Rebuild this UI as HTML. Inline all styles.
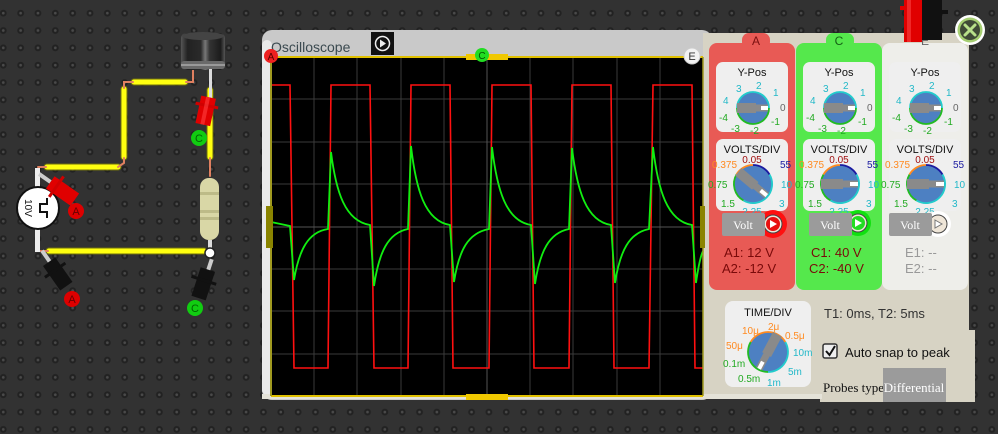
<!DOCTYPE html>
<html><head><meta charset="utf-8">
<style>
html,body{margin:0;padding:0;}
body{width:998px;height:434px;overflow:hidden;background-color:#323232;
background-image:radial-gradient(circle at center,#4a4a4a 0 1.2px,#222 1.6px 3.2px,transparent 3.6px);
background-size:17.35px 17.35px;background-position:-5.4px 4.5px;position:relative;font-family:"Liberation Sans",sans-serif;}
svg{position:absolute;left:0;top:0;}
</style></head><body>
<svg width="998" height="434" viewBox="0 0 998 434" font-family="Liberation Sans, sans-serif">
<defs>
<linearGradient id="capg" x1="0" x2="1" y1="0" y2="0">
 <stop offset="0" stop-color="#555"/><stop offset="0.15" stop-color="#222"/><stop offset="0.45" stop-color="#2a2a2a"/><stop offset="0.55" stop-color="#777"/><stop offset="0.65" stop-color="#333"/><stop offset="0.9" stop-color="#1c1c1c"/><stop offset="1" stop-color="#555"/>
</linearGradient>
</defs>
<!-- ===== circuit ===== -->
<g stroke-linecap="round" fill="none">
 <g stroke="#8a8a00" stroke-width="7" opacity="0.7">
  <path d="M47,167 H118"/><path d="M124,89 V157"/><path d="M134,82 H185"/><path d="M49,251 H204"/><path d="M210,90 V157"/>
 </g>
 <g stroke="#ffff10" stroke-width="5">
  <path d="M47,167 H118"/><path d="M124,89 V157"/><path d="M134,82 H185"/><path d="M49,251 H204"/><path d="M210,90 V157"/>
 </g>
 <g stroke="#e08060" stroke-width="2">
  <path d="M118,167 L124,163 V158"/><path d="M124,88 V82 H133"/><path d="M186,82 H193 V70"/><path d="M38,167 H46"/><path d="M38,251 H48"/><path d="M210,158 V176"/>
 </g>
</g>
<!-- capacitor -->
<rect x="181" y="33" width="44" height="37" rx="5" fill="url(#capg)"/>
<ellipse cx="203" cy="36" rx="21" ry="4" fill="#444"/>
<rect x="181" y="61" width="44" height="8" rx="3" fill="#6a6a6a"/>
<rect x="181" y="64" width="44" height="2" fill="#999"/>
<rect x="209" y="69" width="3" height="30" fill="#ddd"/>
<!-- red probe C -->
<g transform="translate(206,112) rotate(12)">
 <rect x="-8" y="-15" width="15" height="28" fill="#e00000"/>
 <rect x="-12" y="-8" width="23" height="3" fill="#d00000"/>
 <rect x="-3" y="-15" width="4" height="28" fill="#ff4040" opacity="0.6"/>
</g>
<circle cx="199" cy="138" r="8" fill="#11cc11"/><text x="199" y="142" font-size="11" text-anchor="middle" fill="#060">C</text>
<!-- resistor -->
<rect x="200" y="178" width="19" height="62" rx="9" fill="#d9d7a6"/>
<rect x="200" y="192" width="19" height="3" fill="#bdbb88"/><rect x="200" y="210" width="19" height="3" fill="#bdbb88"/><rect x="200" y="217" width="19" height="3" fill="#bdbb88"/>
<rect x="208" y="240" width="4" height="8" fill="#ddd"/>
<circle cx="210" cy="253" r="5" fill="#fff" stroke="#222" stroke-width="1.5"/>
<!-- black probe C -->
<g transform="translate(204,283) rotate(18)">
 <rect x="-2" y="-25" width="4" height="12" fill="#ccc"/>
 <rect x="-8" y="-14" width="15" height="30" fill="#111"/>
 <rect x="-14" y="-4" width="26" height="3" fill="#111"/>
</g>
<circle cx="195" cy="308" r="8" fill="#11cc11"/><text x="195" y="312" font-size="11" text-anchor="middle" fill="#060">C</text>
<!-- function generator -->
<rect x="35" y="168" width="5" height="84" fill="#eee"/>
<circle cx="38" cy="208" r="21" fill="#fff" stroke="#111" stroke-width="2"/>
<path d="M47,198 V204 H40 V212 H47 V218" stroke="#111" stroke-width="2" fill="none"/>
<text transform="translate(25,208) rotate(90)" font-size="10" text-anchor="middle" fill="#111">10V</text>
<!-- red probe A -->
<g transform="translate(62,190) rotate(-55)">
 <rect x="-2" y="-28" width="4" height="14" fill="#ccc"/>
 <rect x="-8" y="-14" width="15" height="30" fill="#e00000"/>
 <rect x="-13" y="-8" width="25" height="3" fill="#d00000"/>
</g>
<circle cx="76" cy="211" r="8" fill="#dd0000"/><text x="76" y="215" font-size="11" text-anchor="middle" fill="#600">A</text>
<!-- black probe A -->
<g transform="translate(57,272) rotate(-35)">
 <rect x="-2" y="-26" width="4" height="14" fill="#ccc"/>
 <rect x="-8" y="-13" width="15" height="30" fill="#111"/>
 <rect x="-13" y="-4" width="25" height="3" fill="#111"/>
</g>
<circle cx="72" cy="299" r="8" fill="#dd0000"/><text x="72" y="303" font-size="11" text-anchor="middle" fill="#600">A</text>

<!-- ===== oscilloscope ===== -->
<rect x="262" y="30" width="450" height="370" rx="10" fill="#c9c9c9"/>
<rect x="262" y="40" width="10" height="355" rx="5" fill="#eaeaea"/>
<rect x="703" y="33" width="266" height="364" fill="#d7d3c4"/>
<rect x="820" y="330" width="155" height="72" fill="#d7d3c4"/>
<rect x="262" y="394" width="560" height="5" fill="#e4e2d8"/>
<text x="271" y="52" font-size="14" fill="#3b4a50">Oscilloscope</text>
<rect x="371" y="32" width="23" height="23" fill="#111"/>
<circle cx="382.5" cy="43.5" r="7" fill="none" stroke="#eee" stroke-width="1.5"/>
<path d="M380,39.5 L386,43.5 L380,47.5Z" fill="#eee"/>
<!-- screen -->
<rect x="271" y="57" width="432" height="339" fill="#000"/>
<g stroke="#3a3a3a" stroke-width="1">
 <path d="M314,57V396M357,57V396M401,57V396M444,57V396M530,57V396M573,57V396M617,57V396M660,57V396"/>
 <path d="M271,99H703M271,142H703M271,184H703M271,269H703M271,311H703M271,354H703"/>
</g>
<g stroke="#555" stroke-width="1"><path d="M487,57V396M271,227H703"/></g>
<path d="M271,85 H290 L294,368 H328 L331,85 H370 L374,368 H408 L411,85 H450 L453,368 H489 L492,85 H531 L534,368 H569 L572,85 H611 L614,368 H649 L653,85 H692 L695,368 H703" fill="none" stroke="#ff1010" stroke-width="1.6"/>
<path d="M271,222 L290,226 L294,280 C299,250 308,232 328,229 L331,152 C336,192 345,221 370,225 L374,286 C379,252 388,233 408,229 L411,146 C416,190 425,221 450,225 L454,282 C459,250 468,233 489,229 L492,147 C497,190 506,221 531,225 L535,284 C540,251 549,233 569,229 L572,148 C577,190 586,221 611,225 L615,283 C620,251 629,233 649,229 L653,147 C658,190 667,221 692,225 L696,283 C699,262 701,255 703,251" fill="none" stroke="#11ee11" stroke-width="1.8"/>
<path d="M271,57 H703" stroke="#e0c000" stroke-width="2"/>
<path d="M271,396 H703" stroke="#e0c000" stroke-width="2"/>
<path d="M271,57 V396" stroke="#a09a20" stroke-width="2"/>
<path d="M703,57 V396" stroke="#a09a20" stroke-width="1.5"/>
<rect x="266" y="206" width="7" height="42" fill="#8a8400"/>
<rect x="700" y="206" width="5" height="42" fill="#8a8400"/>
<rect x="466" y="54" width="42" height="6" fill="#f0c800"/>
<rect x="466" y="394" width="42" height="6" fill="#f0c800"/>
<circle cx="482" cy="55" r="7" fill="#22dd22"/><text x="482" y="59" font-size="10" text-anchor="middle" fill="#050">C</text>
<circle cx="271" cy="56" r="7" fill="#ee2020"/><text x="271" y="60" font-size="10" text-anchor="middle" fill="#500">A</text>
<circle cx="692" cy="56" r="8" fill="#f2f2f2" stroke="#ccc"/><text x="692" y="60" font-size="11" text-anchor="middle" fill="#333">E</text>

<!-- channel panels -->
<g transform="translate(709,0)">
 <rect x="0" y="43" width="86" height="247" rx="8" fill="#e85a55"/>
 <rect x="33" y="33" width="28" height="16" rx="7" fill="#e85a55"/>
 <text x="47" y="45" font-size="12" text-anchor="middle" fill="#7a1010">A</text>
</g>
<g transform="translate(796,0)">
 <rect x="0" y="43" width="86" height="247" rx="8" fill="#55e84c"/>
 <rect x="30" y="33" width="28" height="16" rx="7" fill="#55e84c"/>
 <text x="43" y="45" font-size="12" text-anchor="middle" fill="#156015">C</text>
</g>
<g transform="translate(882,0)">
 <rect x="0" y="43" width="86" height="247" rx="8" fill="#eeeeea"/>
 <text x="43" y="45" font-size="12" text-anchor="middle" fill="#666">E</text>
</g>

<!-- top-right probes and close -->
<rect x="900" y="6" width="8" height="4" fill="#e00000"/>
<rect x="904" y="0" width="18" height="42" fill="#e00000"/>
<rect x="907" y="0" width="4" height="42" fill="#ff5050" opacity="0.5"/>
<rect x="922" y="0" width="20" height="40" fill="#111"/>
<rect x="940" y="10" width="8" height="4" fill="#111"/>
<circle cx="970" cy="30" r="15" fill="#fff"/>
<circle cx="970" cy="30" r="12.5" fill="#a6cf72"/>
<circle cx="970" cy="30" r="10" fill="#3f4a36"/>
<path d="M965,25 L975,35 M975,25 L965,35" stroke="#b8e08a" stroke-width="3" stroke-linecap="round"/>

<g font-size="10">
<!-- A -->
<g transform="translate(709,0)">
 <rect x="7" y="62" width="72" height="70" rx="7" fill="#efefef"/>
 <text x="43" y="76" font-size="11" text-anchor="middle" fill="#111">Y-Pos</text>
 <g transform="translate(44,108)">
  <circle r="16" fill="#4d80c2"/>
  <path d="M-16,0 A16,16 0 0 1 16,0" stroke="#22cccc" stroke-width="1.8" fill="none"/>
  <path d="M16,0 A16,16 0 0 1 -16,0" stroke="#22bb22" stroke-width="1.8" fill="none"/>
  <rect x="-16" y="-5" width="19" height="10" fill="#8a8a8a"/><rect x="0" y="-3.5" width="15" height="7" fill="#8a8a8a"/><rect x="8" y="-2" width="7" height="4" fill="#fff"/>
 </g>
 <text x="27" y="92" fill="#22b8c8">3</text><text x="47" y="89" fill="#22b8c8">2</text><text x="64" y="96" fill="#22b8c8">1</text><text x="14" y="104" fill="#22b8c8">4</text>
 <text x="71" y="111" fill="#666">0</text><text x="10" y="121" fill="#22aa22">-4</text><text x="62" y="125" fill="#22aa22">-1</text><text x="22" y="132" fill="#22aa22">-3</text><text x="41" y="134" fill="#22aa22">-2</text>
 <rect x="7" y="139" width="72" height="72" rx="7" fill="#efefef"/>
 <text x="43" y="153" font-size="11" text-anchor="middle" fill="#111">VOLTS/DIV</text>
 <g transform="translate(44,184)">
  <circle r="19" fill="#4d80c2"/>
  <path d="M-9.5,16.5 A19,19 0 0 1 -16.5,-9.5" stroke="#22bb22" stroke-width="1.8" fill="none"/>
  <path d="M-16.5,-9.5 A19,19 0 0 1 0,-19" stroke="#ff8a20" stroke-width="1.8" fill="none"/>
  <path d="M0,-19 A19,19 0 0 1 16.5,-9.5" stroke="#1a1aa0" stroke-width="1.8" fill="none"/>
  <path d="M16.5,-9.5 A19,19 0 0 1 -9.5,16.5" stroke="#22cccc" stroke-width="1.8" fill="none"/>
  <g transform="rotate(40)"><rect x="-19" y="-5" width="22" height="10" fill="#8a8a8a"/><rect x="0" y="-3.5" width="18" height="7" fill="#8a8a8a"/><rect x="10" y="-2" width="8" height="4" fill="#fff"/></g>
 </g>
 <text x="43" y="163" text-anchor="middle" fill="#a01010">0.05</text>
 <text x="3" y="168" fill="#ff8a20">0.375</text><text x="71" y="168" fill="#1a1aa0">55</text>
 <text x="-1" y="188" fill="#22aa22">0.75</text><text x="72" y="188" fill="#22b8c8">10</text>
 <text x="12" y="207" fill="#22aa22">1.5</text><text x="70" y="207" fill="#22b8c8">3</text>
 <text x="43" y="215" text-anchor="middle" fill="#22b8c8">2.25</text>
 <circle cx="64" cy="224" r="14" fill="#ff1010"/>
 <circle cx="64" cy="224" r="9" fill="#efe6d8" stroke="#444" stroke-width="1"/>
 <circle cx="64" cy="224" r="7" fill="#e81010"/>
 <path d="M61,220 L68,224 L61,228Z" fill="#fff"/>
 <rect x="13" y="213" width="43" height="23" rx="2" fill="#9b9b9b"/>
 <text x="34" y="229" font-size="12" text-anchor="middle" fill="#fff" font-family="Liberation Serif, serif">Volt</text>
 <text x="15" y="257" font-size="13" fill="#7a0a0a">A1: 12 V</text>
 <text x="13" y="273" font-size="13" fill="#7a0a0a">A2: -12 V</text>
</g>
<!-- C -->
<g transform="translate(796,0)">
 <rect x="7" y="62" width="72" height="70" rx="7" fill="#efefef"/>
 <text x="43" y="76" font-size="11" text-anchor="middle" fill="#111">Y-Pos</text>
 <g transform="translate(44,108)">
  <circle r="16" fill="#4d80c2"/>
  <path d="M-16,0 A16,16 0 0 1 16,0" stroke="#22cccc" stroke-width="1.8" fill="none"/>
  <path d="M16,0 A16,16 0 0 1 -16,0" stroke="#22bb22" stroke-width="1.8" fill="none"/>
  <rect x="-16" y="-5" width="19" height="10" fill="#8a8a8a"/><rect x="0" y="-3.5" width="15" height="7" fill="#8a8a8a"/><rect x="8" y="-2" width="7" height="4" fill="#fff"/>
 </g>
 <text x="27" y="92" fill="#22b8c8">3</text><text x="47" y="89" fill="#22b8c8">2</text><text x="64" y="96" fill="#22b8c8">1</text><text x="14" y="104" fill="#22b8c8">4</text>
 <text x="71" y="111" fill="#666">0</text><text x="10" y="121" fill="#22aa22">-4</text><text x="62" y="125" fill="#22aa22">-1</text><text x="22" y="132" fill="#22aa22">-3</text><text x="41" y="134" fill="#22aa22">-2</text>
 <rect x="7" y="139" width="72" height="72" rx="7" fill="#efefef"/>
 <text x="43" y="153" font-size="11" text-anchor="middle" fill="#111">VOLTS/DIV</text>
 <g transform="translate(44,184)">
  <circle r="19" fill="#4d80c2"/>
  <path d="M-9.5,16.5 A19,19 0 0 1 -16.5,-9.5" stroke="#22bb22" stroke-width="1.8" fill="none"/>
  <path d="M-16.5,-9.5 A19,19 0 0 1 0,-19" stroke="#ff8a20" stroke-width="1.8" fill="none"/>
  <path d="M0,-19 A19,19 0 0 1 16.5,-9.5" stroke="#1a1aa0" stroke-width="1.8" fill="none"/>
  <path d="M16.5,-9.5 A19,19 0 0 1 -9.5,16.5" stroke="#22cccc" stroke-width="1.8" fill="none"/>
  <rect x="-19" y="-5" width="22" height="10" fill="#8a8a8a"/><rect x="0" y="-3.5" width="18" height="7" fill="#8a8a8a"/><rect x="10" y="-2" width="8" height="4" fill="#fff"/>
 </g>
 <text x="43" y="163" text-anchor="middle" fill="#a01010">0.05</text>
 <text x="3" y="168" fill="#ff8a20">0.375</text><text x="71" y="168" fill="#1a1aa0">55</text>
 <text x="-1" y="188" fill="#22aa22">0.75</text><text x="72" y="188" fill="#22b8c8">10</text>
 <text x="12" y="207" fill="#22aa22">1.5</text><text x="70" y="207" fill="#22b8c8">3</text>
 <text x="43" y="215" text-anchor="middle" fill="#22b8c8">2.25</text>
 <circle cx="62" cy="223" r="13" fill="#10e010"/>
 <circle cx="62" cy="223" r="9" fill="#efe6d8" stroke="#444" stroke-width="1"/>
 <circle cx="62" cy="223" r="7" fill="#22dd22"/>
 <path d="M59,219 L66,223 L59,227Z" fill="#fff"/>
 <rect x="13" y="213" width="43" height="23" rx="2" fill="#9b9b9b"/>
 <text x="34" y="229" font-size="12" text-anchor="middle" fill="#fff" font-family="Liberation Serif, serif">Volt</text>
 <text x="15" y="257" font-size="13" fill="#7a0a0a">C1: 40 V</text>
 <text x="13" y="273" font-size="13" fill="#7a0a0a">C2: -40 V</text>
</g>
<!-- E -->
<g transform="translate(882,0)">
 <rect x="7" y="62" width="72" height="70" rx="7" fill="#efefef"/>
 <text x="43" y="76" font-size="11" text-anchor="middle" fill="#111">Y-Pos</text>
 <g transform="translate(44,108)">
  <circle r="16" fill="#4d80c2"/>
  <path d="M-16,0 A16,16 0 0 1 16,0" stroke="#22cccc" stroke-width="1.8" fill="none"/>
  <path d="M16,0 A16,16 0 0 1 -16,0" stroke="#22bb22" stroke-width="1.8" fill="none"/>
  <rect x="-16" y="-5" width="19" height="10" fill="#8a8a8a"/><rect x="0" y="-3.5" width="15" height="7" fill="#8a8a8a"/><rect x="8" y="-2" width="7" height="4" fill="#fff"/>
 </g>
 <text x="27" y="92" fill="#22b8c8">3</text><text x="47" y="89" fill="#22b8c8">2</text><text x="64" y="96" fill="#22b8c8">1</text><text x="14" y="104" fill="#22b8c8">4</text>
 <text x="71" y="111" fill="#666">0</text><text x="10" y="121" fill="#22aa22">-4</text><text x="62" y="125" fill="#22aa22">-1</text><text x="22" y="132" fill="#22aa22">-3</text><text x="41" y="134" fill="#22aa22">-2</text>
 <rect x="7" y="139" width="72" height="72" rx="7" fill="#efefef"/>
 <text x="43" y="153" font-size="11" text-anchor="middle" fill="#111">VOLTS/DIV</text>
 <g transform="translate(44,184)">
  <circle r="19" fill="#4d80c2"/>
  <path d="M-9.5,16.5 A19,19 0 0 1 -16.5,-9.5" stroke="#22bb22" stroke-width="1.8" fill="none"/>
  <path d="M-16.5,-9.5 A19,19 0 0 1 0,-19" stroke="#ff8a20" stroke-width="1.8" fill="none"/>
  <path d="M0,-19 A19,19 0 0 1 16.5,-9.5" stroke="#1a1aa0" stroke-width="1.8" fill="none"/>
  <path d="M16.5,-9.5 A19,19 0 0 1 -9.5,16.5" stroke="#22cccc" stroke-width="1.8" fill="none"/>
  <rect x="-19" y="-5" width="22" height="10" fill="#8a8a8a"/><rect x="0" y="-3.5" width="18" height="7" fill="#8a8a8a"/><rect x="10" y="-2" width="8" height="4" fill="#fff"/>
 </g>
 <text x="43" y="163" text-anchor="middle" fill="#a01010">0.05</text>
 <text x="3" y="168" fill="#ff8a20">0.375</text><text x="71" y="168" fill="#1a1aa0">55</text>
 <text x="-1" y="188" fill="#22aa22">0.75</text><text x="72" y="188" fill="#22b8c8">10</text>
 <text x="12" y="207" fill="#22aa22">1.5</text><text x="70" y="207" fill="#22b8c8">3</text>
 <text x="43" y="215" text-anchor="middle" fill="#22b8c8">2.25</text>
 <circle cx="56" cy="224" r="13" fill="#ffffff"/>
 <circle cx="56" cy="224" r="9" fill="#efe6d8" stroke="#444" stroke-width="1"/>
 <path d="M53,220 L60,224 L53,228Z" fill="#fff" stroke="#777" stroke-width="1"/>
 <rect x="7" y="213" width="43" height="23" rx="2" fill="#9b9b9b"/>
 <text x="28" y="229" font-size="12" text-anchor="middle" fill="#fff" font-family="Liberation Serif, serif">Volt</text>
 <text x="23" y="257" font-size="13" fill="#999">E1: --</text>
 <text x="23" y="273" font-size="13" fill="#999">E2: --</text>
</g>
</g>

<!-- TIME/DIV -->
<rect x="725" y="301" width="86" height="86" rx="8" fill="#efefef"/>
<text x="768" y="316" font-size="11" text-anchor="middle" fill="#111">TIME/DIV</text>
<g transform="translate(768,352)">
 <circle r="20" fill="#4d80c2"/>
 <path d="M-17.3,-10 A20,20 0 0 1 17.3,-10" stroke="#ff8a20" stroke-width="1.8" fill="none"/>
 <path d="M17.3,-10 A20,20 0 0 1 0,20" stroke="#22cccc" stroke-width="1.8" fill="none"/>
 <path d="M0,20 A20,20 0 0 1 -17.3,-10" stroke="#22bb22" stroke-width="1.8" fill="none"/>
 <g transform="rotate(118)"><rect x="-20" y="-5" width="23" height="10" fill="#8a8a8a"/><rect x="0" y="-3.5" width="19" height="7" fill="#8a8a8a"/><rect x="11" y="-2" width="8" height="4" fill="#fff"/></g>
</g>
<g font-size="10">
 <text x="742" y="334" fill="#ff8a20">10μ</text><text x="768" y="330" fill="#ff8a20">2μ</text><text x="785" y="339" fill="#ff8a20">0.5μ</text>
 <text x="726" y="349" fill="#ff8a20">50μ</text><text x="793" y="356" fill="#22b8c8">10m</text>
 <text x="723" y="367" fill="#22aa22">0.1m</text><text x="788" y="375" fill="#22b8c8">5m</text>
 <text x="738" y="382" fill="#22aa22">0.5m</text><text x="767" y="386" fill="#22b8c8">1m</text>
</g>
<text x="824" y="318" font-size="13" fill="#333">T1: 0ms, T2: 5ms</text>
<rect x="823" y="344" width="14" height="14" rx="2" fill="#eee" stroke="#333" stroke-width="1.5"/>
<path d="M826,351 L829.5,355 L835,346" stroke="#111" stroke-width="2" fill="none"/>
<text x="845" y="357" font-size="13" fill="#111">Auto snap to peak</text>
<text x="823" y="392" font-size="13" fill="#111" font-family="Liberation Serif, serif">Probes type</text>
<rect x="883" y="368" width="63" height="34" fill="#9b9b9b"/>
<text x="914" y="392" font-size="13" text-anchor="middle" fill="#fff" font-family="Liberation Serif, serif">Differential</text>
</svg>
</body></html>
